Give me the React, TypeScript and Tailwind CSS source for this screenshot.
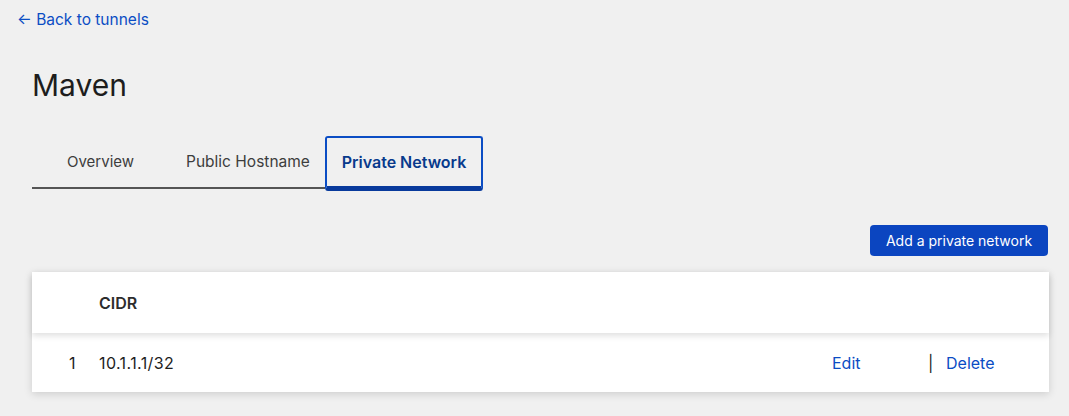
import React from "react";

export default function App() {
  return (
    <div
      className="min-h-[416px] w-full bg-[#f0f0f0] text-[#1d1d1d]"
      style={{ fontFamily: "Inter, 'Noto Sans', sans-serif" }}
    >
      <div className="px-[17px] pt-[7px]">
        <a className="text-[15.5px] leading-[20px] text-[#0b4dc4] cursor-pointer">← Back to tunnels</a>
      </div>
      <div className="pl-[32px] pr-[20px]">
        <h1 className="mt-[36px] text-[30px] leading-[36px] font-normal text-[#1d1d1d]">Maven</h1>
        <div className="mt-[33px] flex items-end">
          <div className="flex w-[293px] items-end border-b-[2px] border-[#555]">
            <div className="flex h-[50px] items-center pl-[35px] text-[15px] text-[#3d3d3d]">Overview</div>
            <div className="flex h-[50px] items-center pl-[52px] text-[15.5px] text-[#3d3d3d]">Public Hostname</div>
          </div>
          <div className="flex h-[55px] w-[158px] items-center justify-center rounded-[3px] border-2 border-b-[5px] border-[#0b4dc4] border-b-[#083a9c] text-[16px] font-semibold text-[#083a8c] -mb-[2px]">
            Private Network
          </div>
        </div>
        <div className="mt-[36px] flex justify-end pr-[1px]">
          <button className="h-[31px] w-[178px] rounded-[4px] bg-[#0b45c0] text-[14px] text-white">
            Add a private network
          </button>
        </div>
        <div className="mt-[16px] bg-white shadow-[0_2px_8px_rgba(0,0,0,0.15)]">
          <div className="relative z-10 flex h-[61px] items-center bg-white shadow-[0_3px_6px_rgba(0,0,0,0.12)]">
            <div className="w-[67px]" />
            <div className="text-[16px] font-semibold text-[#2d2d2d]">CIDR</div>
          </div>
          <div className="flex h-[59px] items-center text-[16px]">
            <div className="w-[67px] pl-[37px] text-[#1d1d1d]">1</div>
            <div className="flex-1 tracking-[0.4px] text-[#1d1d1d]">10.1.1.1/32</div>
            <div className="w-[96px] text-[#0b4dc4]">Edit</div>
            <div className="w-[18px] text-[#1d1d1d]">|</div>
            <div className="w-[103px] text-[#0b4dc4]">Delete</div>
          </div>
        </div>
      </div>
    </div>
  );
}
